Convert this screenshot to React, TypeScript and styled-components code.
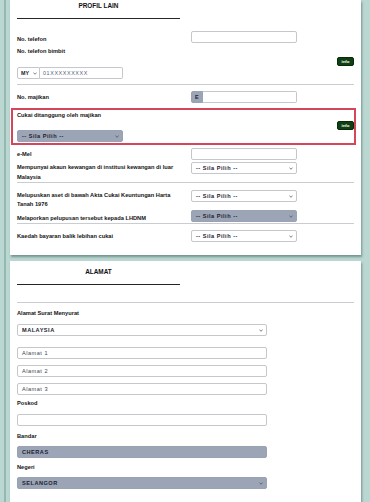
import React from 'react';
import styled, { createGlobalStyle } from 'styled-components';

const GlobalStyle = createGlobalStyle`
  html, body {
    margin: 0;
    padding: 0;
    background: #bad7d1;
    overflow: hidden;
  }
  body {
    font-family: "Liberation Sans", Arial, sans-serif;
    color: #111;
  }
  * { box-sizing: border-box; }
`;

const Frame = styled.div`
  height: 502px;
  margin-left: 4px;
  padding-left: 4px;
  border-left: 2px solid #95b8b1;
  overflow: hidden;
`;

const Card = styled.section<{ $pb: number; $mt?: number }>`
  width: 351px;
  margin-top: ${p => p.$mt ?? 0}px;
  padding: 0 7px ${p => p.$pb}px;
  background: #fff;
  box-shadow: 1px 2px 2px rgba(60, 95, 90, 0.55);
`;

const Title = styled.h2<{ $top: number; $thick?: boolean }>`
  margin: 0;
  width: 163px;
  padding: ${p => p.$top}px 0 8px;
  text-align: center;
  font-size: 6.4px;
  line-height: 8px;
  font-weight: 700;
  border-bottom: ${p => (p.$thick ? 1.5 : 1)}px solid #262626;
`;

const Row = styled.div<{ $mt: number; $align?: string }>`
  display: grid;
  grid-template-columns: 174px 106px 1fr;
  align-items: ${p => p.$align ?? 'center'};
  margin-top: ${p => p.$mt}px;
`;

const Label = styled.div<{ $lh?: number; $mt?: number; $pt?: number }>`
  margin-top: ${p => p.$mt ?? 0}px;
  padding-top: ${p => p.$pt ?? 0}px;
  font-size: 5.7px;
  line-height: ${p => p.$lh ?? 8}px;
  font-weight: 700;
  color: #141414;
`;

const Divider = styled.hr<{ $mt: number }>`
  margin: ${p => p.$mt}px 0 0;
  border: 0;
  border-top: 1px solid #c9cdd1;
`;

const InfoLine = styled.div<{ $mt: number }>`
  display: flex;
  justify-content: flex-end;
  margin-top: ${p => p.$mt}px;
`;

const InfoButton = styled.button`
  width: 17px;
  height: 9px;
  padding: 0;
  border: 1px solid #082a0b;
  border-radius: 2px;
  background: #0f3f13;
  color: #fff;
  font-family: "Liberation Sans", Arial, sans-serif;
  font-size: 4.4px;
  font-weight: 700;
  line-height: 7px;
`;

const Field = styled.div<{ $gray?: boolean; $w?: number; $mt?: number; $plain?: boolean }>`
  display: flex;
  align-items: center;
  justify-content: space-between;
  width: ${p => (p.$w ? `${p.$w}px` : '100%')};
  height: 12px;
  margin-top: ${p => p.$mt ?? 0}px;
  padding: 0 3px 0 4px;
  border: 1px solid ${p => (p.$gray ? '#9aa3b4' : '#c4c8cd')};
  border-radius: 2px;
  background: ${p => (p.$gray ? '#9ca5b6' : '#fff')};
  font-size: 5.6px;
  letter-spacing: 0.5px;
  font-weight: ${p => (p.$plain ? 400 : 700)};
  color: ${p => (p.$plain ? '#3f4550' : '#1b2130')};
  white-space: nowrap;
`;

const Group = styled.div<{ $mt?: number; $w: number }>`
  display: flex;
  width: ${p => p.$w}px;
  height: 12px;
  margin-top: ${p => p.$mt ?? 0}px;
`;

const Prefix = styled.div<{ $w: number; $gray?: boolean }>`
  display: flex;
  align-items: center;
  justify-content: space-between;
  flex: 0 0 ${p => p.$w}px;
  padding: 0 2px 0 3px;
  border: 1px solid ${p => (p.$gray ? '#9aa3b4' : '#c4c8cd')};
  border-radius: 2px 0 0 2px;
  background: ${p => (p.$gray ? '#9ca5b6' : '#fff')};
  font-size: 5.4px;
  font-weight: 700;
  color: #1b2130;
`;

const Rest = styled.div`
  flex: 1;
  display: flex;
  align-items: center;
  padding-left: 3px;
  border: 1px solid #c4c8cd;
  border-left: 0;
  border-radius: 0 2px 2px 0;
  background: #fff;
  font-size: 5.4px;
  letter-spacing: 0.6px;
  color: #55627e;
`;

const RedBox = styled.div<{ $mt: number }>`
  margin: ${p => p.$mt}px -2px 0 -6px;
  padding: 1px 0 1px 4px;
  border: 2px solid #d4475b;
`;

const Chevron = () => (
  <svg width="4" height="3" viewBox="0 0 8 6" aria-hidden="true">
    <path d="M1 1.2 L4 4.6 L7 1.2" fill="none" stroke="#4a4f5a" strokeWidth="1.4" />
  </svg>
);

const Info = () => <InfoButton type="button">info</InfoButton>;

const Select = ({ text, gray, w, mt }: { text: string; gray?: boolean; w?: number; mt?: number }) => (
  <Field $gray={gray} $w={w} $mt={mt}>
    <span>{text}</span>
    <Chevron />
  </Field>
);

export default function App() {
  return (
    <>
      <GlobalStyle />
      <Frame>
        <Card $pb={13}>
          <Title $top={2}>PROFIL LAIN</Title>

          <Row $mt={12} $align="end">
            <Label>No. telefon</Label>
            <Field />
          </Row>

          <Label $mt={4}>No. telefon bimbit</Label>
          <InfoLine $mt={2}>
            <Info />
          </InfoLine>
          <Group $mt={1} $w={106}>
            <Prefix $w={23}>
              MY
              <Chevron />
            </Prefix>
            <Rest>01XXXXXXXXX</Rest>
          </Group>

          <Divider $mt={5} />

          <Row $mt={6}>
            <Label>No. majikan</Label>
            <Group $w={106}>
              <Prefix $w={12} $gray>E</Prefix>
              <Rest />
            </Group>
          </Row>

          <RedBox $mt={5}>
            <Label>Cukai ditanggung oleh majikan</Label>
            <InfoLine $mt={2}>
              <Info />
            </InfoLine>
            <Select text="-- Sila Pilih --" gray w={106} />
          </RedBox>

          <Row $mt={3}>
            <Label>e-Mel</Label>
            <Field />
          </Row>

          <Row $mt={2} $align="start">
            <Label $lh={10}>
              Mempunyai akaun kewangan di institusi kewangan di luar
              <br />
              Malaysia
            </Label>
            <Select text="-- Sila Pilih --" />
          </Row>

          <Divider $mt={0} />

          <Row $mt={7} $align="start">
            <Label $lh={9} $pt={1}>
              Melupuskan aset di bawah Akta Cukai Keuntungan Harta
              <br />
              Tanah 1976
            </Label>
            <Select text="-- Sila Pilih --" />
          </Row>

          <Row $mt={1} $align="end">
            <Label>Melaporkan pelupusan tersebut kepada LHDNM</Label>
            <Select text="-- Sila Pilih --" gray />
          </Row>

          <Divider $mt={1} />

          <Row $mt={6}>
            <Label>Kaedah bayaran balik lebihan cukai</Label>
            <Select text="-- Sila Pilih --" />
          </Row>
        </Card>

        <Card $pb={20} $mt={6}>
          <Title $top={7} $thick>ALAMAT</Title>
          <Divider $mt={17} />

          <Label $mt={6}>Alamat Surat Menyurat</Label>
          <Select text="MALAYSIA" w={250} mt={7} />

          <Field $w={250} $mt={11} $plain>Alamat 1</Field>
          <Field $w={250} $mt={6} $plain>Alamat 2</Field>
          <Field $w={250} $mt={6} $plain>Alamat 3</Field>

          <Label $mt={4}>Poskod</Label>
          <Field $w={250} $mt={7} />

          <Label $mt={6}>Bandar</Label>
          <Field $w={250} $mt={6} $gray>CHERAS</Field>

          <Label $mt={5}>Negeri</Label>
          <Select text="SELANGOR" gray w={250} mt={6} />
        </Card>
      </Frame>
    </>
  );
}
